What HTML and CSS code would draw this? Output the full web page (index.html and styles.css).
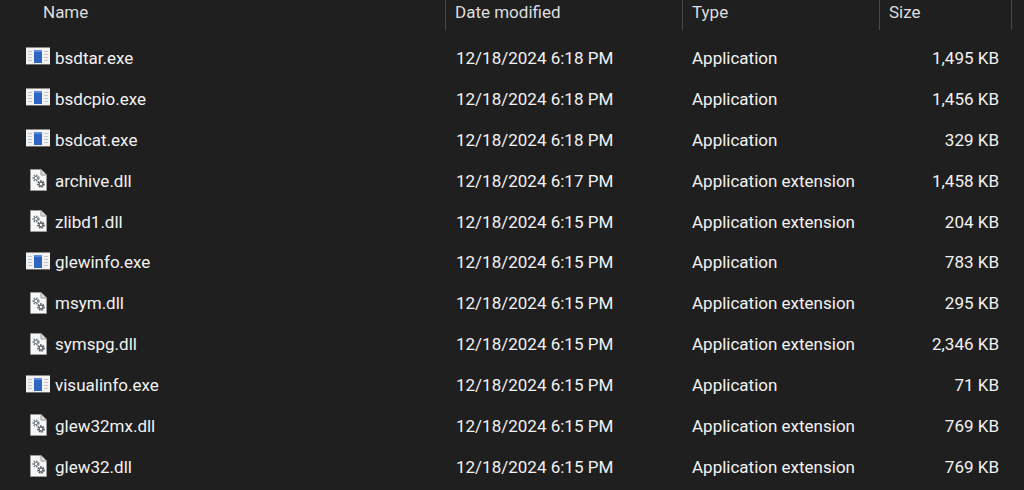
FILE: index.html
```html
<!DOCTYPE html>
<html lang="en">
<head>
    <meta charset="UTF-8">
    <meta name="viewport" content="width=device-width, initial-scale=1.0">
    <title>Files</title>
    <link rel="stylesheet" href="styles.css">
</head>
<body>
    <svg class="icon-defs" width="0" height="0">
        <symbol id="exe" viewBox="0 0 24 18">
            <rect x="0" y="0" width="24" height="18" fill="#f2f2f2"/>
            <rect x="0" y="0" width="24" height="1" fill="#8c8c8c"/>
            <rect x="0" y="17" width="24" height="1" fill="#6e6e6e"/>
            <rect x="2" y="4" width="4" height="1" fill="#b9c6d6"/>
            <rect x="2" y="7" width="4" height="1" fill="#b9c6d6"/>
            <rect x="2" y="10" width="4" height="1" fill="#b9c6d6"/>
            <rect x="2" y="13" width="4" height="1" fill="#b9c6d6"/>
            <rect x="18" y="4" width="4" height="1" fill="#c8c8c8"/>
            <rect x="18" y="7" width="4" height="1" fill="#c8c8c8"/>
            <rect x="18" y="10" width="4" height="1" fill="#c8c8c8"/>
            <rect x="18" y="13" width="4" height="1" fill="#c8c8c8"/>
            <rect x="8" y="3" width="8" height="13" fill="#2f66c4"/>
            <rect x="8" y="3" width="8" height="2" fill="#5b8bdc"/>
        </symbol>
        <symbol id="dll" viewBox="0 0 18 22">
            <path d="M1.5 .5H12L17.500 6V21.500H1.500Z" fill="#f7f7f7" stroke="#9a9a9a"/>
            <path d="M12 .5V6H17.500" fill="#dcdcdc" stroke="#9a9a9a"/>
            <circle cx="7" cy="9" r="2.600" fill="none" stroke="#7d8790" stroke-width="2" stroke-dasharray="1.500 .9"/>
            <circle cx="7" cy="9" r="1.700" fill="none" stroke="#7d8790"/>
            <circle cx="12" cy="15" r="2.800" fill="none" stroke="#50565c" stroke-width="2" stroke-dasharray="1.500 .9"/>
            <circle cx="12" cy="15" r="1.900" fill="none" stroke="#50565c"/>
        </symbol>
    </svg>

    <div class="file-list">
        <div class="header">
            <div class="col col-name">Name</div>
            <div class="col">Date modified</div>
            <div class="col">Type</div>
            <div class="col">Size</div>
            <div class="col-end"></div>
        </div>

        <div class="row">
            <div class="name"><svg class="icon-exe"><use href="#exe"/></svg>bsdtar.exe</div>
            <div>12/18/2024 6:18 PM</div>
            <div>Application</div>
            <div class="size">1,495 KB</div>
        </div>
        <div class="row">
            <div class="name"><svg class="icon-exe"><use href="#exe"/></svg>bsdcpio.exe</div>
            <div>12/18/2024 6:18 PM</div>
            <div>Application</div>
            <div class="size">1,456 KB</div>
        </div>
        <div class="row">
            <div class="name"><svg class="icon-exe"><use href="#exe"/></svg>bsdcat.exe</div>
            <div>12/18/2024 6:18 PM</div>
            <div>Application</div>
            <div class="size">329 KB</div>
        </div>
        <div class="row">
            <div class="name"><svg class="icon-dll"><use href="#dll"/></svg>archive.dll</div>
            <div>12/18/2024 6:17 PM</div>
            <div>Application extension</div>
            <div class="size">1,458 KB</div>
        </div>
        <div class="row">
            <div class="name"><svg class="icon-dll"><use href="#dll"/></svg>zlibd1.dll</div>
            <div>12/18/2024 6:15 PM</div>
            <div>Application extension</div>
            <div class="size">204 KB</div>
        </div>
        <div class="row">
            <div class="name"><svg class="icon-exe"><use href="#exe"/></svg>glewinfo.exe</div>
            <div>12/18/2024 6:15 PM</div>
            <div>Application</div>
            <div class="size">783 KB</div>
        </div>
        <div class="row">
            <div class="name"><svg class="icon-dll"><use href="#dll"/></svg>msym.dll</div>
            <div>12/18/2024 6:15 PM</div>
            <div>Application extension</div>
            <div class="size">295 KB</div>
        </div>
        <div class="row">
            <div class="name"><svg class="icon-dll"><use href="#dll"/></svg>symspg.dll</div>
            <div>12/18/2024 6:15 PM</div>
            <div>Application extension</div>
            <div class="size">2,346 KB</div>
        </div>
        <div class="row">
            <div class="name"><svg class="icon-exe"><use href="#exe"/></svg>visualinfo.exe</div>
            <div>12/18/2024 6:15 PM</div>
            <div>Application</div>
            <div class="size">71 KB</div>
        </div>
        <div class="row">
            <div class="name"><svg class="icon-dll"><use href="#dll"/></svg>glew32mx.dll</div>
            <div>12/18/2024 6:15 PM</div>
            <div>Application extension</div>
            <div class="size">769 KB</div>
        </div>
        <div class="row">
            <div class="name"><svg class="icon-dll"><use href="#dll"/></svg>glew32.dll</div>
            <div>12/18/2024 6:15 PM</div>
            <div>Application extension</div>
            <div class="size">769 KB</div>
        </div>
    </div>
</body>
</html>
```

FILE: styles.css
```css
* {
    margin: 0;
    padding: 0;
    box-sizing: border-box;
}

html, body {
    height: 100%;
    overflow: hidden;
}

body {
    background: #1f1f1f;
    color: #f2f2f2;
    font-family: Roboto, 'Open Sans', sans-serif;
    font-size: 17px;
}

.icon-defs {
    position: absolute;
}

.header, .row {
    display: grid;
    grid-template-columns: 445px 237px 197px 132px 13px;
}

.header {
    height: 30px;
    color: #dedede;
}

.col {
    border-left: 1px solid #4a4a4a;
    padding: 0 0 0 9px;
    height: 30px;
    line-height: 24px;
}

.col-name {
    border-left: none;
    padding-left: 43px;
}

.col-end {
    border-left: 1px solid #4a4a4a;
}

.row {
    height: 40.9px;
    line-height: 40.9px;
}

.row:nth-child(2) {
    margin-top: 8px;
}

.row > div:nth-child(2) {
    padding-left: 11px;
}

.row > div:nth-child(3) {
    padding-left: 10px;
}

.name {
    display: flex;
    align-items: center;
    padding-left: 26px;
}

.icon-exe {
    width: 24px;
    height: 18px;
    margin: -4px 5px 0 0;
}

.icon-dll {
    width: 18px;
    height: 22px;
    margin: -2px 8px 0 3px;
}

.size {
    text-align: right;
    padding-right: 12px;
}
```
